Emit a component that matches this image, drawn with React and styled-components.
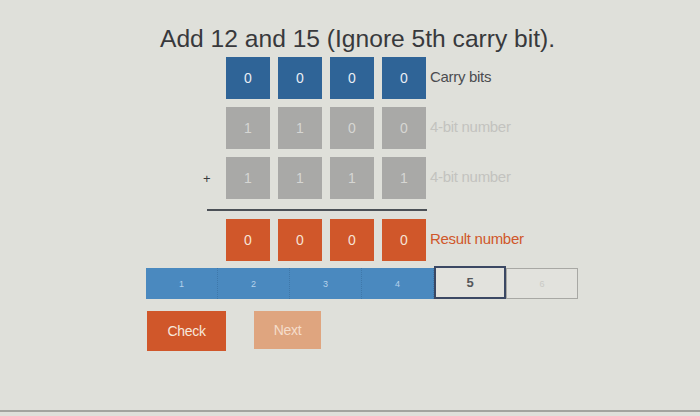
import styled, { createGlobalStyle } from "styled-components";

const GlobalStyle = createGlobalStyle`
  html, body {
    margin: 0;
    padding: 0;
    background: #dfe0da;
  }
  body {
    font-family: "Liberation Sans", Arial, sans-serif;
  }
`;

const rows = [
  { kind: "carry", sign: "", bits: ["0", "0", "0", "0"], label: "Carry bits" },
  { kind: "input", sign: "", bits: ["1", "1", "0", "0"], label: "4-bit number" },
  { kind: "input", sign: "+", bits: ["1", "1", "1", "1"], label: "4-bit number" },
];

const result = { kind: "result", bits: ["0", "0", "0", "0"], label: "Result number" };

const steps = [
  { n: "1", state: "done" },
  { n: "2", state: "done" },
  { n: "3", state: "done" },
  { n: "4", state: "done" },
  { n: "5", state: "current" },
  { n: "6", state: "todo" },
];

export default function App() {
  return (
    <>
      <GlobalStyle />
      <Page>
        <Title>Add 12 and 15 (Ignore 5th carry bit).</Title>
        <Sum>
          {rows.map((row, i) => (
            <BitRow key={i}>
              <Sign>{row.sign}</Sign>
              {row.bits.map((b, j) => (
                <Bit key={j} $kind={row.kind}>
                  {b}
                </Bit>
              ))}
              <RowLabel $kind={row.kind}>{row.label}</RowLabel>
            </BitRow>
          ))}
          <Rule />
          <BitRow>
            <Sign />
            {result.bits.map((b, j) => (
              <Bit key={j} $kind={result.kind}>
                {b}
              </Bit>
            ))}
            <RowLabel $kind={result.kind}>{result.label}</RowLabel>
          </BitRow>
        </Sum>
        <Progress>
          {steps.map((s) => (
            <Step key={s.n} $state={s.state}>
              {s.n}
            </Step>
          ))}
        </Progress>
        <Actions>
          <Button $variant="check">Check</Button>
          <Button $variant="next">Next</Button>
        </Actions>
      </Page>
    </>
  );
}

const Page = styled.div`
  box-sizing: border-box;
  height: 412px;
  padding: 24px 0 0 146px;
  border-bottom: 2px solid #a3a49f;
`;

const Title = styled.h1`
  margin: 0 0 4px 14px;
  font-size: 24.6px;
  line-height: 29px;
  font-weight: 400;
  color: #38393c;
  white-space: nowrap;
`;

const Sum = styled.div`
  display: flex;
  flex-direction: column;
  gap: 8px;
  margin-left: 54px;
`;

const BitRow = styled.div`
  display: flex;
  align-items: center;
  gap: 8px;
  height: 42px;
`;

const Sign = styled.span`
  box-sizing: border-box;
  width: 18px;
  padding-left: 3px;
  font-size: 13px;
  color: #3a3b3d;
  text-align: left;
`;

const bitColors = {
  carry: { bg: "#2f6497", fg: "#e9eef5" },
  input: { bg: "#a9a9a7", fg: "#d6d6d3" },
  result: { bg: "#d0572a", fg: "#f6e3d6" },
};

const Bit = styled.div`
  width: 44px;
  height: 42px;
  display: flex;
  align-items: center;
  justify-content: center;
  background: ${(p) => bitColors[p.$kind].bg};
  color: ${(p) => bitColors[p.$kind].fg};
  font-size: 14px;
`;

const labelColors = {
  carry: "#4b4c4f",
  input: "#c3c3bf",
  result: "#d0572a",
};

const RowLabel = styled.span`
  margin-left: -4px;
  margin-top: -4px;
  font-size: 15px;
  letter-spacing: -0.3px;
  color: ${(p) => labelColors[p.$kind]};
`;

const Rule = styled.div`
  width: 220px;
  height: 2px;
  margin: 2px 0 0 7px;
  background: #4b5056;
`;

const Progress = styled.div`
  display: grid;
  grid-template-columns: repeat(6, 72px);
  height: 31px;
  margin-top: 7px;
`;

const Step = styled.div`
  box-sizing: border-box;
  display: flex;
  align-items: center;
  justify-content: center;
  font-size: ${(p) => (p.$state === "current" ? "13px" : "9px")};
  font-weight: ${(p) => (p.$state === "current" ? 700 : 400)};
  background: ${(p) => (p.$state === "done" ? "#4a89bf" : "#e2e2dd")};
  color: ${(p) =>
    p.$state === "done" ? "#b5d2ec" : p.$state === "current" ? "#55575a" : "#c9c9c5"};
  border: ${(p) =>
    p.$state === "current"
      ? "2px solid #3b4863"
      : p.$state === "todo"
      ? "1px solid #a8a8a4"
      : "none"};
  border-right: ${(p) => (p.$state === "done" ? "1px dotted #3f78aa" : undefined)};
  ${(p) => p.$state === "current" && "margin-top: -2px; height: 33px;"}
`;

const Actions = styled.div`
  display: flex;
  align-items: flex-start;
  gap: 28px;
  margin-top: 12px;
  margin-left: 1px;
`;

const Button = styled.button`
  border: none;
  font-family: "Liberation Sans", Arial, sans-serif;
  font-size: 14px;
  letter-spacing: -0.3px;
  padding: 0;
  width: ${(p) => (p.$variant === "check" ? "79px" : "67px")};
  height: ${(p) => (p.$variant === "check" ? "40px" : "38px")};
  background: ${(p) => (p.$variant === "check" ? "#d0572a" : "#dfa57f")};
  color: ${(p) => (p.$variant === "check" ? "#f7e7dc" : "#f5ddcb")};
`;
